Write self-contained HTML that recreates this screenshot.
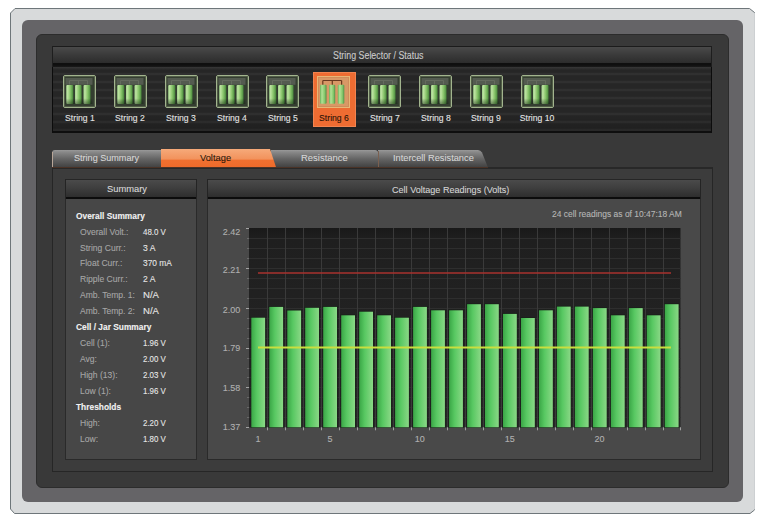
<!DOCTYPE html>
<html><head><meta charset="utf-8">
<style>
*{margin:0;padding:0;box-sizing:border-box}
html,body{width:763px;height:525px;overflow:hidden;background:#fff;font-family:"Liberation Sans",sans-serif}
.a{position:absolute}
.t{position:absolute;white-space:nowrap;line-height:1;transform-origin:0 0;-webkit-text-stroke:0.1px currentColor;-webkit-font-smoothing:antialiased}
#f1{left:10px;top:8px;width:745px;height:506px;background:#d8d9d9;border:1px solid #6e7378;border-right-color:#b8b8b8;border-radius:5px}
#f2{left:22px;top:20px;width:721px;height:482px;background:#656467;border-radius:6px}
#f3{left:36px;top:34px;width:693px;height:454px;background:#393939;border:1px solid #2c2c2c;border-radius:6px}
#hdr{left:52px;top:46px;width:660px;height:21px;border-left:1px solid #1e1e1e;border-right:1px solid #1e1e1e;background:linear-gradient(#1c1c1c 0,#1c1c1c 1px,#4a4a4a 1px,#3a3a3a 9px,#2c2c2c 17px,#0f0f0f 17px,#0f0f0f 19px,#1a1a1a 21px)}
#strs{left:52px;top:67px;width:660px;height:66px;background:linear-gradient(rgba(70,70,70,0.5),rgba(0,0,0,0) 3px),linear-gradient(rgba(0,0,0,0),rgba(0,0,0,0) 70%,rgba(0,0,0,0.18)),repeating-linear-gradient(#262626 0px,#262626 5px,#343434 6.5px,#262626 8px);background-position:0 0,0 0,0 0.5px;border:1px solid #0c0c0c;border-top:none;border-bottom:2px solid #0e0e0e}
#panel{left:52px;top:167px;width:661px;height:305px;background:#3c3c3c;border:1px solid #262626;border-top:2px solid #282828}
.ph{position:absolute;height:20px;box-shadow:inset 1px 0 #242424,inset -1px 0 #242424;background:linear-gradient(#262626 0,#262626 1px,#4a4a4a 1.5px,#3e3e3e 9px,#2e2e2e 18px,#0c0c0c 18.5px,#0c0c0c 20px)}
#sb{left:65px;top:199px;width:132px;height:261px;background:#474747;border:1px solid #2a2a2a;border-top:none}
#cb{left:207px;top:199px;width:494px;height:261px;background:#494949;border:1px solid #2a2a2a;border-top:none}
</style></head><body>
<svg class="a" style="left:0;top:0" width="763" height="525" viewBox="0 0 763 525">
<path d="M15 8.5H749.5L754.5 12.5V510L750 513.5H14.5L10.5 509V13Z" fill="#d8dadb" stroke="#6e767a" stroke-width="1"/>
<line x1="754.5" y1="13" x2="754.5" y2="509.5" stroke="#cdd0d2" stroke-width="1"/>
</svg>
<div class="a" id="f2"></div>
<div class="a" id="f3"></div>
<div class="a" id="hdr"></div>
<div class="t" style="left:333.40px;top:50.53px;font-size:10px;color:#cbcbcb;transform:scaleX(0.885)">String Selector / Status</div>
<div class="a" id="strs"></div>
<svg width="0" height="0" style="position:absolute"><defs>
<linearGradient id="bg" x1="0" x2="1" y1="0" y2="0"><stop offset="0" stop-color="#a0d08c"/><stop offset="0.2" stop-color="#bce2a0"/><stop offset="0.55" stop-color="#8ac66c"/><stop offset="0.85" stop-color="#5c9c4a"/><stop offset="1" stop-color="#3e6a34"/></linearGradient>
<linearGradient id="bg2" x1="0" x2="1" y1="0" y2="0"><stop offset="0" stop-color="#6cb05a"/><stop offset="0.3" stop-color="#b2e296"/><stop offset="0.7" stop-color="#86c86c"/><stop offset="1" stop-color="#4e9045"/></linearGradient>
<linearGradient id="bsh" x1="0" x2="0" y1="0" y2="1"><stop offset="0.7" stop-color="#000" stop-opacity="0"/><stop offset="1" stop-color="#102010" stop-opacity="0.45"/></linearGradient>
<linearGradient id="gb" x1="0" x2="1" y1="0" y2="0"><stop offset="0" stop-color="#3aa646"/><stop offset="0.4" stop-color="#58c862"/><stop offset="1" stop-color="#8ad886"/></linearGradient>
</defs></svg>
<svg class="a" style="left:63px;top:75px" width="33" height="33" viewBox="0 0 33 33">
<rect x="0.5" y="0.5" width="32" height="32" rx="1.5" fill="#343e30" stroke="#a2b48e"/>
<rect x="1.5" y="1.5" width="30" height="30" fill="none" stroke="#5a664e" stroke-opacity="0.8"/>
<rect x="2.5" y="3" width="27" height="6.8" fill="#545b50"/>
<path d="M6.5 5.5H24.5M6.5 5.5V9.5M15.5 5.5V9.5M24.5 5.5V9.5" stroke="#646b5e" stroke-width="1" fill="none"/>
<rect x="3.2" y="10" width="7.2" height="19" rx="1" fill="url(#bg)"/>
<rect x="12" y="10" width="6.8" height="19" rx="1" fill="url(#bg)"/>
<rect x="20.5" y="10" width="7.2" height="19" rx="1" fill="url(#bg)"/>
<rect x="2.5" y="10" width="27" height="19" fill="url(#bsh)"/>
</svg>
<div class="t" style="left:49.5px;top:113.07px;width:60px;text-align:center;font-size:9.6px;color:#e4e4e4;transform:scaleX(0.9);transform-origin:30px 0">String 1</div>
<svg class="a" style="left:114px;top:75px" width="33" height="33" viewBox="0 0 33 33">
<rect x="0.5" y="0.5" width="32" height="32" rx="1.5" fill="#343e30" stroke="#a2b48e"/>
<rect x="1.5" y="1.5" width="30" height="30" fill="none" stroke="#5a664e" stroke-opacity="0.8"/>
<rect x="2.5" y="3" width="27" height="6.8" fill="#545b50"/>
<path d="M6.5 5.5H24.5M6.5 5.5V9.5M15.5 5.5V9.5M24.5 5.5V9.5" stroke="#646b5e" stroke-width="1" fill="none"/>
<rect x="3.2" y="10" width="7.2" height="19" rx="1" fill="url(#bg)"/>
<rect x="12" y="10" width="6.8" height="19" rx="1" fill="url(#bg)"/>
<rect x="20.5" y="10" width="7.2" height="19" rx="1" fill="url(#bg)"/>
<rect x="2.5" y="10" width="27" height="19" fill="url(#bsh)"/>
</svg>
<div class="t" style="left:100.4px;top:113.07px;width:60px;text-align:center;font-size:9.6px;color:#e4e4e4;transform:scaleX(0.9);transform-origin:30px 0">String 2</div>
<svg class="a" style="left:165px;top:75px" width="33" height="33" viewBox="0 0 33 33">
<rect x="0.5" y="0.5" width="32" height="32" rx="1.5" fill="#343e30" stroke="#a2b48e"/>
<rect x="1.5" y="1.5" width="30" height="30" fill="none" stroke="#5a664e" stroke-opacity="0.8"/>
<rect x="2.5" y="3" width="27" height="6.8" fill="#545b50"/>
<path d="M6.5 5.5H24.5M6.5 5.5V9.5M15.5 5.5V9.5M24.5 5.5V9.5" stroke="#646b5e" stroke-width="1" fill="none"/>
<rect x="3.2" y="10" width="7.2" height="19" rx="1" fill="url(#bg)"/>
<rect x="12" y="10" width="6.8" height="19" rx="1" fill="url(#bg)"/>
<rect x="20.5" y="10" width="7.2" height="19" rx="1" fill="url(#bg)"/>
<rect x="2.5" y="10" width="27" height="19" fill="url(#bsh)"/>
</svg>
<div class="t" style="left:151.2px;top:113.07px;width:60px;text-align:center;font-size:9.6px;color:#e4e4e4;transform:scaleX(0.9);transform-origin:30px 0">String 3</div>
<svg class="a" style="left:216px;top:75px" width="33" height="33" viewBox="0 0 33 33">
<rect x="0.5" y="0.5" width="32" height="32" rx="1.5" fill="#343e30" stroke="#a2b48e"/>
<rect x="1.5" y="1.5" width="30" height="30" fill="none" stroke="#5a664e" stroke-opacity="0.8"/>
<rect x="2.5" y="3" width="27" height="6.8" fill="#545b50"/>
<path d="M6.5 5.5H24.5M6.5 5.5V9.5M15.5 5.5V9.5M24.5 5.5V9.5" stroke="#646b5e" stroke-width="1" fill="none"/>
<rect x="3.2" y="10" width="7.2" height="19" rx="1" fill="url(#bg)"/>
<rect x="12" y="10" width="6.8" height="19" rx="1" fill="url(#bg)"/>
<rect x="20.5" y="10" width="7.2" height="19" rx="1" fill="url(#bg)"/>
<rect x="2.5" y="10" width="27" height="19" fill="url(#bsh)"/>
</svg>
<div class="t" style="left:202.1px;top:113.07px;width:60px;text-align:center;font-size:9.6px;color:#e4e4e4;transform:scaleX(0.9);transform-origin:30px 0">String 4</div>
<svg class="a" style="left:266px;top:75px" width="33" height="33" viewBox="0 0 33 33">
<rect x="0.5" y="0.5" width="32" height="32" rx="1.5" fill="#343e30" stroke="#a2b48e"/>
<rect x="1.5" y="1.5" width="30" height="30" fill="none" stroke="#5a664e" stroke-opacity="0.8"/>
<rect x="2.5" y="3" width="27" height="6.8" fill="#545b50"/>
<path d="M6.5 5.5H24.5M6.5 5.5V9.5M15.5 5.5V9.5M24.5 5.5V9.5" stroke="#646b5e" stroke-width="1" fill="none"/>
<rect x="3.2" y="10" width="7.2" height="19" rx="1" fill="url(#bg)"/>
<rect x="12" y="10" width="6.8" height="19" rx="1" fill="url(#bg)"/>
<rect x="20.5" y="10" width="7.2" height="19" rx="1" fill="url(#bg)"/>
<rect x="2.5" y="10" width="27" height="19" fill="url(#bsh)"/>
</svg>
<div class="t" style="left:252.9px;top:113.07px;width:60px;text-align:center;font-size:9.6px;color:#e4e4e4;transform:scaleX(0.9);transform-origin:30px 0">String 5</div>
<div class="a" style="left:313px;top:72px;width:43px;height:55px;background:#ee6c32;border:1px solid #f28450"></div>
<svg class="a" style="left:317px;top:76px" width="33" height="32" viewBox="0 0 33 32">
<rect x="0.5" y="0.5" width="32" height="31" fill="#d89866" stroke="#e8b676"/>
<rect x="1.5" y="1.5" width="30" height="29" fill="none" stroke="#cf8c5a"/>
<path d="M5.8 4.5H24.6M5.8 4.5V9M15.3 4.5V9M24.6 4.5V9" stroke="#6b3a20" stroke-width="1.2" fill="none"/>
<rect x="3" y="8.8" width="6.5" height="19" rx="1" fill="url(#bg2)"/>
<rect x="12" y="8.8" width="6.2" height="19" rx="1" fill="url(#bg2)"/>
<rect x="20.8" y="8.8" width="6.5" height="19" rx="1" fill="url(#bg2)"/>
</svg>
<div class="t" style="left:303.8px;top:113.07px;width:60px;text-align:center;font-size:9.6px;color:#2a1206;transform:scaleX(0.9);transform-origin:30px 0">String 6</div>
<svg class="a" style="left:368px;top:75px" width="33" height="33" viewBox="0 0 33 33">
<rect x="0.5" y="0.5" width="32" height="32" rx="1.5" fill="#343e30" stroke="#a2b48e"/>
<rect x="1.5" y="1.5" width="30" height="30" fill="none" stroke="#5a664e" stroke-opacity="0.8"/>
<rect x="2.5" y="3" width="27" height="6.8" fill="#545b50"/>
<path d="M6.5 5.5H24.5M6.5 5.5V9.5M15.5 5.5V9.5M24.5 5.5V9.5" stroke="#646b5e" stroke-width="1" fill="none"/>
<rect x="3.2" y="10" width="7.2" height="19" rx="1" fill="url(#bg)"/>
<rect x="12" y="10" width="6.8" height="19" rx="1" fill="url(#bg)"/>
<rect x="20.5" y="10" width="7.2" height="19" rx="1" fill="url(#bg)"/>
<rect x="2.5" y="10" width="27" height="19" fill="url(#bsh)"/>
</svg>
<div class="t" style="left:354.7px;top:113.07px;width:60px;text-align:center;font-size:9.6px;color:#e4e4e4;transform:scaleX(0.9);transform-origin:30px 0">String 7</div>
<svg class="a" style="left:419px;top:75px" width="33" height="33" viewBox="0 0 33 33">
<rect x="0.5" y="0.5" width="32" height="32" rx="1.5" fill="#343e30" stroke="#a2b48e"/>
<rect x="1.5" y="1.5" width="30" height="30" fill="none" stroke="#5a664e" stroke-opacity="0.8"/>
<rect x="2.5" y="3" width="27" height="6.8" fill="#545b50"/>
<path d="M6.5 5.5H24.5M6.5 5.5V9.5M15.5 5.5V9.5M24.5 5.5V9.5" stroke="#646b5e" stroke-width="1" fill="none"/>
<rect x="3.2" y="10" width="7.2" height="19" rx="1" fill="url(#bg)"/>
<rect x="12" y="10" width="6.8" height="19" rx="1" fill="url(#bg)"/>
<rect x="20.5" y="10" width="7.2" height="19" rx="1" fill="url(#bg)"/>
<rect x="2.5" y="10" width="27" height="19" fill="url(#bsh)"/>
</svg>
<div class="t" style="left:405.5px;top:113.07px;width:60px;text-align:center;font-size:9.6px;color:#e4e4e4;transform:scaleX(0.9);transform-origin:30px 0">String 8</div>
<svg class="a" style="left:470px;top:75px" width="33" height="33" viewBox="0 0 33 33">
<rect x="0.5" y="0.5" width="32" height="32" rx="1.5" fill="#343e30" stroke="#a2b48e"/>
<rect x="1.5" y="1.5" width="30" height="30" fill="none" stroke="#5a664e" stroke-opacity="0.8"/>
<rect x="2.5" y="3" width="27" height="6.8" fill="#545b50"/>
<path d="M6.5 5.5H24.5M6.5 5.5V9.5M15.5 5.5V9.5M24.5 5.5V9.5" stroke="#646b5e" stroke-width="1" fill="none"/>
<rect x="3.2" y="10" width="7.2" height="19" rx="1" fill="url(#bg)"/>
<rect x="12" y="10" width="6.8" height="19" rx="1" fill="url(#bg)"/>
<rect x="20.5" y="10" width="7.2" height="19" rx="1" fill="url(#bg)"/>
<rect x="2.5" y="10" width="27" height="19" fill="url(#bsh)"/>
</svg>
<div class="t" style="left:456.4px;top:113.07px;width:60px;text-align:center;font-size:9.6px;color:#e4e4e4;transform:scaleX(0.9);transform-origin:30px 0">String 9</div>
<svg class="a" style="left:521px;top:75px" width="33" height="33" viewBox="0 0 33 33">
<rect x="0.5" y="0.5" width="32" height="32" rx="1.5" fill="#343e30" stroke="#a2b48e"/>
<rect x="1.5" y="1.5" width="30" height="30" fill="none" stroke="#5a664e" stroke-opacity="0.8"/>
<rect x="2.5" y="3" width="27" height="6.8" fill="#545b50"/>
<path d="M6.5 5.5H24.5M6.5 5.5V9.5M15.5 5.5V9.5M24.5 5.5V9.5" stroke="#646b5e" stroke-width="1" fill="none"/>
<rect x="3.2" y="10" width="7.2" height="19" rx="1" fill="url(#bg)"/>
<rect x="12" y="10" width="6.8" height="19" rx="1" fill="url(#bg)"/>
<rect x="20.5" y="10" width="7.2" height="19" rx="1" fill="url(#bg)"/>
<rect x="2.5" y="10" width="27" height="19" fill="url(#bsh)"/>
</svg>
<div class="t" style="left:507.2px;top:113.07px;width:60px;text-align:center;font-size:9.6px;color:#e4e4e4;transform:scaleX(0.9);transform-origin:30px 0">String 10</div>
<div class="a" id="panel"></div>
<svg class="a" style="left:52px;top:149px" width="440" height="20" viewBox="0 0 440 20">
<defs>
<linearGradient id="tg" x1="0" x2="0" y1="0" y2="1"><stop offset="0" stop-color="#9a9a9a"/><stop offset="0.1" stop-color="#8a8a8a"/><stop offset="0.5" stop-color="#646464"/><stop offset="1" stop-color="#3e3e3e"/></linearGradient>
<linearGradient id="to" x1="0" x2="0" y1="0" y2="1"><stop offset="0" stop-color="#f6aa7a"/><stop offset="0.53" stop-color="#f2925c"/><stop offset="0.59" stop-color="#f07030"/><stop offset="1" stop-color="#ee6a2a"/></linearGradient>
</defs>
<path d="M0 19V4Q0 1 3 1H112V19Z" fill="url(#tg)"/>
<path d="M219 1H323Q325.5 1 326.5 4V19H219Z" fill="url(#tg)"/>
<path d="M326 1H426Q428.5 1 430 3.5L436.2 19H326Z" fill="url(#tg)"/>
<path d="M109 0H218L224.3 19H109Z" fill="url(#to)"/>
<line x1="326.5" y1="2" x2="326.5" y2="19" stroke="#7a6050" stroke-width="1"/>
<line x1="0.5" y1="3" x2="0.5" y2="19" stroke="#b8a698" stroke-width="1"/>
<line x1="0" y1="18.5" x2="436" y2="18.5" stroke="#4a3226" stroke-width="1"/>
</svg>
<div class="t" style="left:74.00px;top:153.00px;font-size:9.8px;color:#d6d6d6;transform:scaleX(0.926)">String Summary</div>
<div class="t" style="left:199.60px;top:153.00px;font-size:9.8px;color:#2a160a;transform:scaleX(0.950)">Voltage</div>
<div class="t" style="left:300.80px;top:153.00px;font-size:9.8px;color:#d6d6d6;transform:scaleX(0.965)">Resistance</div>
<div class="t" style="left:392.60px;top:153.00px;font-size:9.8px;color:#d6d6d6;transform:scaleX(0.945)">Intercell Resistance</div>
<div class="ph" style="left:65px;top:179px;width:132px"></div>
<div class="a" id="sb"></div>
<div class="t" style="left:107.40px;top:183.90px;font-size:9.8px;color:#d8d8d8;transform:scaleX(0.953)">Summary</div>
<div class="t" style="left:75.60px;top:212.38px;font-size:9px;color:#f2f2f2;font-weight:bold;transform:scaleX(0.930)">Overall Summary</div>
<div class="t" style="left:79.60px;top:228.38px;font-size:9px;color:#a6a6a6;transform:scaleX(0.950)">Overall Volt.:</div>
<div class="t" style="left:143.40px;top:228.38px;font-size:9px;color:#e6e6e6;transform:scaleX(0.880)">48.0 V</div>
<div class="t" style="left:79.60px;top:244.38px;font-size:9px;color:#a6a6a6;transform:scaleX(0.950)">String Curr.:</div>
<div class="t" style="left:143.40px;top:244.38px;font-size:9px;color:#e6e6e6;transform:scaleX(0.950)">3 A</div>
<div class="t" style="left:79.60px;top:259.38px;font-size:9px;color:#a6a6a6;transform:scaleX(0.950)">Float Curr.:</div>
<div class="t" style="left:143.40px;top:259.38px;font-size:9px;color:#e6e6e6;transform:scaleX(0.930)">370 mA</div>
<div class="t" style="left:79.60px;top:275.38px;font-size:9px;color:#a6a6a6;transform:scaleX(0.950)">Ripple Curr.:</div>
<div class="t" style="left:143.40px;top:275.38px;font-size:9px;color:#e6e6e6;transform:scaleX(0.950)">2 A</div>
<div class="t" style="left:79.60px;top:291.38px;font-size:9px;color:#a6a6a6;transform:scaleX(0.950)">Amb. Temp. 1:</div>
<div class="t" style="left:143.40px;top:291.38px;font-size:9px;color:#e6e6e6;transform:scaleX(1.060)">N/A</div>
<div class="t" style="left:79.60px;top:307.38px;font-size:9px;color:#a6a6a6;transform:scaleX(0.950)">Amb. Temp. 2:</div>
<div class="t" style="left:143.40px;top:307.38px;font-size:9px;color:#e6e6e6;transform:scaleX(1.060)">N/A</div>
<div class="t" style="left:75.60px;top:323.38px;font-size:9px;color:#f2f2f2;font-weight:bold;transform:scaleX(0.930)">Cell / Jar Summary</div>
<div class="t" style="left:79.60px;top:339.38px;font-size:9px;color:#a6a6a6;transform:scaleX(0.950)">Cell (1):</div>
<div class="t" style="left:143.40px;top:339.38px;font-size:9px;color:#e6e6e6;transform:scaleX(0.880)">1.96 V</div>
<div class="t" style="left:79.60px;top:355.38px;font-size:9px;color:#a6a6a6;transform:scaleX(0.950)">Avg:</div>
<div class="t" style="left:143.40px;top:355.38px;font-size:9px;color:#e6e6e6;transform:scaleX(0.880)">2.00 V</div>
<div class="t" style="left:79.60px;top:371.38px;font-size:9px;color:#a6a6a6;transform:scaleX(0.950)">High (13):</div>
<div class="t" style="left:143.40px;top:371.38px;font-size:9px;color:#e6e6e6;transform:scaleX(0.880)">2.03 V</div>
<div class="t" style="left:79.60px;top:387.38px;font-size:9px;color:#a6a6a6;transform:scaleX(0.950)">Low (1):</div>
<div class="t" style="left:143.40px;top:387.38px;font-size:9px;color:#e6e6e6;transform:scaleX(0.880)">1.96 V</div>
<div class="t" style="left:75.60px;top:403.38px;font-size:9px;color:#f2f2f2;font-weight:bold;transform:scaleX(0.930)">Thresholds</div>
<div class="t" style="left:79.60px;top:419.38px;font-size:9px;color:#a6a6a6;transform:scaleX(0.950)">High:</div>
<div class="t" style="left:143.40px;top:419.38px;font-size:9px;color:#e6e6e6;transform:scaleX(0.880)">2.20 V</div>
<div class="t" style="left:79.60px;top:435.38px;font-size:9px;color:#a6a6a6;transform:scaleX(0.950)">Low:</div>
<div class="t" style="left:143.40px;top:435.38px;font-size:9px;color:#e6e6e6;transform:scaleX(0.880)">1.80 V</div>
<div class="ph" style="left:207px;top:179px;width:494px"></div>
<div class="a" id="cb"></div>
<div class="t" style="left:392.40px;top:184.50px;font-size:9.8px;color:#d4d4d4;transform:scaleX(0.925)">Cell Voltage Readings (Volts)</div>
<div class="t" style="left:552.20px;top:210.38px;font-size:9px;color:#b6b6b6;transform:scaleX(0.940)">24 cell readings as of 10:47:18 AM</div>
<svg class="a" style="left:0;top:0" width="763" height="525" viewBox="0 0 763 525">
<defs><linearGradient id="pbg" x1="0" x2="0" y1="0" y2="1"><stop offset="0" stop-color="#191919"/><stop offset="0.06" stop-color="#1f1f1f"/><stop offset="1" stop-color="#262626"/></linearGradient></defs>
<rect x="249" y="228" width="431.5" height="199.3" fill="url(#pbg)"/>
<line x1="249" y1="238.5" x2="680.5" y2="238.5" stroke="#2e2e2e" stroke-width="1"/>
<line x1="249" y1="248.5" x2="680.5" y2="248.5" stroke="#2e2e2e" stroke-width="1"/>
<line x1="249" y1="258.5" x2="680.5" y2="258.5" stroke="#2e2e2e" stroke-width="1"/>
<line x1="249" y1="268.5" x2="680.5" y2="268.5" stroke="#2e2e2e" stroke-width="1"/>
<line x1="249" y1="278.5" x2="680.5" y2="278.5" stroke="#2e2e2e" stroke-width="1"/>
<line x1="249" y1="288.5" x2="680.5" y2="288.5" stroke="#2e2e2e" stroke-width="1"/>
<line x1="249" y1="298.5" x2="680.5" y2="298.5" stroke="#2e2e2e" stroke-width="1"/>
<line x1="249" y1="308.5" x2="680.5" y2="308.5" stroke="#2e2e2e" stroke-width="1"/>
<line x1="249" y1="318.5" x2="680.5" y2="318.5" stroke="#2e2e2e" stroke-width="1"/>
<line x1="249" y1="328.5" x2="680.5" y2="328.5" stroke="#2e2e2e" stroke-width="1"/>
<line x1="249" y1="338.5" x2="680.5" y2="338.5" stroke="#2e2e2e" stroke-width="1"/>
<line x1="249" y1="348.5" x2="680.5" y2="348.5" stroke="#2e2e2e" stroke-width="1"/>
<line x1="249" y1="358.5" x2="680.5" y2="358.5" stroke="#2e2e2e" stroke-width="1"/>
<line x1="249" y1="368.5" x2="680.5" y2="368.5" stroke="#2e2e2e" stroke-width="1"/>
<line x1="249" y1="377.5" x2="680.5" y2="377.5" stroke="#2e2e2e" stroke-width="1"/>
<line x1="249" y1="387.5" x2="680.5" y2="387.5" stroke="#2e2e2e" stroke-width="1"/>
<line x1="249" y1="397.5" x2="680.5" y2="397.5" stroke="#2e2e2e" stroke-width="1"/>
<line x1="249" y1="407.5" x2="680.5" y2="407.5" stroke="#2e2e2e" stroke-width="1"/>
<line x1="249" y1="417.5" x2="680.5" y2="417.5" stroke="#2e2e2e" stroke-width="1"/>
<line x1="267.5" y1="228" x2="267.5" y2="427.3" stroke="#3a3a3a" stroke-width="1"/>
<line x1="285.5" y1="228" x2="285.5" y2="427.3" stroke="#3a3a3a" stroke-width="1"/>
<line x1="303.5" y1="228" x2="303.5" y2="427.3" stroke="#3a3a3a" stroke-width="1"/>
<line x1="321.5" y1="228" x2="321.5" y2="427.3" stroke="#3a3a3a" stroke-width="1"/>
<line x1="339.5" y1="228" x2="339.5" y2="427.3" stroke="#3a3a3a" stroke-width="1"/>
<line x1="357.5" y1="228" x2="357.5" y2="427.3" stroke="#3a3a3a" stroke-width="1"/>
<line x1="375.5" y1="228" x2="375.5" y2="427.3" stroke="#3a3a3a" stroke-width="1"/>
<line x1="393.5" y1="228" x2="393.5" y2="427.3" stroke="#3a3a3a" stroke-width="1"/>
<line x1="411.5" y1="228" x2="411.5" y2="427.3" stroke="#3a3a3a" stroke-width="1"/>
<line x1="429.5" y1="228" x2="429.5" y2="427.3" stroke="#3a3a3a" stroke-width="1"/>
<line x1="447.5" y1="228" x2="447.5" y2="427.3" stroke="#3a3a3a" stroke-width="1"/>
<line x1="465.5" y1="228" x2="465.5" y2="427.3" stroke="#3a3a3a" stroke-width="1"/>
<line x1="483.5" y1="228" x2="483.5" y2="427.3" stroke="#3a3a3a" stroke-width="1"/>
<line x1="501.5" y1="228" x2="501.5" y2="427.3" stroke="#3a3a3a" stroke-width="1"/>
<line x1="519.5" y1="228" x2="519.5" y2="427.3" stroke="#3a3a3a" stroke-width="1"/>
<line x1="537.5" y1="228" x2="537.5" y2="427.3" stroke="#3a3a3a" stroke-width="1"/>
<line x1="555.5" y1="228" x2="555.5" y2="427.3" stroke="#3a3a3a" stroke-width="1"/>
<line x1="573.5" y1="228" x2="573.5" y2="427.3" stroke="#3a3a3a" stroke-width="1"/>
<line x1="591.5" y1="228" x2="591.5" y2="427.3" stroke="#3a3a3a" stroke-width="1"/>
<line x1="609.5" y1="228" x2="609.5" y2="427.3" stroke="#3a3a3a" stroke-width="1"/>
<line x1="627.5" y1="228" x2="627.5" y2="427.3" stroke="#3a3a3a" stroke-width="1"/>
<line x1="645.5" y1="228" x2="645.5" y2="427.3" stroke="#3a3a3a" stroke-width="1"/>
<line x1="663.5" y1="228" x2="663.5" y2="427.3" stroke="#3a3a3a" stroke-width="1"/>
<rect x="251.3" y="317.7" width="13.8" height="109.6" fill="none" stroke="#141c14" stroke-opacity="0.7" stroke-width="1.4"/>
<rect x="251.3" y="317.7" width="13.8" height="109.6" fill="url(#gb)"/>
<rect x="269.3" y="306.9" width="13.8" height="120.4" fill="none" stroke="#141c14" stroke-opacity="0.7" stroke-width="1.4"/>
<rect x="269.3" y="306.9" width="13.8" height="120.4" fill="url(#gb)"/>
<rect x="287.3" y="310.5" width="13.8" height="116.8" fill="none" stroke="#141c14" stroke-opacity="0.7" stroke-width="1.4"/>
<rect x="287.3" y="310.5" width="13.8" height="116.8" fill="url(#gb)"/>
<rect x="305.2" y="307.8" width="13.8" height="119.5" fill="none" stroke="#141c14" stroke-opacity="0.7" stroke-width="1.4"/>
<rect x="305.2" y="307.8" width="13.8" height="119.5" fill="url(#gb)"/>
<rect x="323.2" y="306.9" width="13.8" height="120.4" fill="none" stroke="#141c14" stroke-opacity="0.7" stroke-width="1.4"/>
<rect x="323.2" y="306.9" width="13.8" height="120.4" fill="url(#gb)"/>
<rect x="341.2" y="315.3" width="13.8" height="112.0" fill="none" stroke="#141c14" stroke-opacity="0.7" stroke-width="1.4"/>
<rect x="341.2" y="315.3" width="13.8" height="112.0" fill="url(#gb)"/>
<rect x="359.2" y="311.7" width="13.8" height="115.6" fill="none" stroke="#141c14" stroke-opacity="0.7" stroke-width="1.4"/>
<rect x="359.2" y="311.7" width="13.8" height="115.6" fill="url(#gb)"/>
<rect x="377.2" y="315.3" width="13.8" height="112.0" fill="none" stroke="#141c14" stroke-opacity="0.7" stroke-width="1.4"/>
<rect x="377.2" y="315.3" width="13.8" height="112.0" fill="url(#gb)"/>
<rect x="395.1" y="317.7" width="13.8" height="109.6" fill="none" stroke="#141c14" stroke-opacity="0.7" stroke-width="1.4"/>
<rect x="395.1" y="317.7" width="13.8" height="109.6" fill="url(#gb)"/>
<rect x="413.1" y="306.9" width="13.8" height="120.4" fill="none" stroke="#141c14" stroke-opacity="0.7" stroke-width="1.4"/>
<rect x="413.1" y="306.9" width="13.8" height="120.4" fill="url(#gb)"/>
<rect x="431.1" y="310.3" width="13.8" height="117.0" fill="none" stroke="#141c14" stroke-opacity="0.7" stroke-width="1.4"/>
<rect x="431.1" y="310.3" width="13.8" height="117.0" fill="url(#gb)"/>
<rect x="449.1" y="310.3" width="13.8" height="117.0" fill="none" stroke="#141c14" stroke-opacity="0.7" stroke-width="1.4"/>
<rect x="449.1" y="310.3" width="13.8" height="117.0" fill="url(#gb)"/>
<rect x="467.1" y="304.2" width="13.8" height="123.1" fill="none" stroke="#141c14" stroke-opacity="0.7" stroke-width="1.4"/>
<rect x="467.1" y="304.2" width="13.8" height="123.1" fill="url(#gb)"/>
<rect x="485.0" y="304.2" width="13.8" height="123.1" fill="none" stroke="#141c14" stroke-opacity="0.7" stroke-width="1.4"/>
<rect x="485.0" y="304.2" width="13.8" height="123.1" fill="url(#gb)"/>
<rect x="503.0" y="313.9" width="13.8" height="113.4" fill="none" stroke="#141c14" stroke-opacity="0.7" stroke-width="1.4"/>
<rect x="503.0" y="313.9" width="13.8" height="113.4" fill="url(#gb)"/>
<rect x="521.0" y="318.0" width="13.8" height="109.3" fill="none" stroke="#141c14" stroke-opacity="0.7" stroke-width="1.4"/>
<rect x="521.0" y="318.0" width="13.8" height="109.3" fill="url(#gb)"/>
<rect x="539.0" y="310.3" width="13.8" height="117.0" fill="none" stroke="#141c14" stroke-opacity="0.7" stroke-width="1.4"/>
<rect x="539.0" y="310.3" width="13.8" height="117.0" fill="url(#gb)"/>
<rect x="556.9" y="306.6" width="13.8" height="120.7" fill="none" stroke="#141c14" stroke-opacity="0.7" stroke-width="1.4"/>
<rect x="556.9" y="306.6" width="13.8" height="120.7" fill="url(#gb)"/>
<rect x="574.9" y="306.6" width="13.8" height="120.7" fill="none" stroke="#141c14" stroke-opacity="0.7" stroke-width="1.4"/>
<rect x="574.9" y="306.6" width="13.8" height="120.7" fill="url(#gb)"/>
<rect x="592.9" y="308.1" width="13.8" height="119.2" fill="none" stroke="#141c14" stroke-opacity="0.7" stroke-width="1.4"/>
<rect x="592.9" y="308.1" width="13.8" height="119.2" fill="url(#gb)"/>
<rect x="610.9" y="315.3" width="13.8" height="112.0" fill="none" stroke="#141c14" stroke-opacity="0.7" stroke-width="1.4"/>
<rect x="610.9" y="315.3" width="13.8" height="112.0" fill="url(#gb)"/>
<rect x="628.9" y="308.1" width="13.8" height="119.2" fill="none" stroke="#141c14" stroke-opacity="0.7" stroke-width="1.4"/>
<rect x="628.9" y="308.1" width="13.8" height="119.2" fill="url(#gb)"/>
<rect x="646.8" y="315.3" width="13.8" height="112.0" fill="none" stroke="#141c14" stroke-opacity="0.7" stroke-width="1.4"/>
<rect x="646.8" y="315.3" width="13.8" height="112.0" fill="url(#gb)"/>
<rect x="664.8" y="304.2" width="13.8" height="123.1" fill="none" stroke="#141c14" stroke-opacity="0.7" stroke-width="1.4"/>
<rect x="664.8" y="304.2" width="13.8" height="123.1" fill="url(#gb)"/>
<line x1="258" y1="273" x2="671" y2="273" stroke="#a8322e" stroke-width="1.6"/>
<line x1="258" y1="347.6" x2="671" y2="347.6" stroke="#cade3e" stroke-width="2"/>
<line x1="246" y1="228.5" x2="249" y2="228.5" stroke="#a4a4a4" stroke-width="1"/>
<line x1="247" y1="238.5" x2="249" y2="238.5" stroke="#6a6a6a" stroke-width="1"/>
<line x1="247" y1="248.5" x2="249" y2="248.5" stroke="#6a6a6a" stroke-width="1"/>
<line x1="247" y1="258.5" x2="249" y2="258.5" stroke="#6a6a6a" stroke-width="1"/>
<line x1="246" y1="268.5" x2="249" y2="268.5" stroke="#a4a4a4" stroke-width="1"/>
<line x1="247" y1="278.5" x2="249" y2="278.5" stroke="#6a6a6a" stroke-width="1"/>
<line x1="247" y1="288.5" x2="249" y2="288.5" stroke="#6a6a6a" stroke-width="1"/>
<line x1="247" y1="298.5" x2="249" y2="298.5" stroke="#6a6a6a" stroke-width="1"/>
<line x1="246" y1="308.5" x2="249" y2="308.5" stroke="#a4a4a4" stroke-width="1"/>
<line x1="247" y1="318.5" x2="249" y2="318.5" stroke="#6a6a6a" stroke-width="1"/>
<line x1="247" y1="328.5" x2="249" y2="328.5" stroke="#6a6a6a" stroke-width="1"/>
<line x1="247" y1="338.5" x2="249" y2="338.5" stroke="#6a6a6a" stroke-width="1"/>
<line x1="246" y1="348.5" x2="249" y2="348.5" stroke="#a4a4a4" stroke-width="1"/>
<line x1="247" y1="358.5" x2="249" y2="358.5" stroke="#6a6a6a" stroke-width="1"/>
<line x1="247" y1="368.5" x2="249" y2="368.5" stroke="#6a6a6a" stroke-width="1"/>
<line x1="247" y1="377.5" x2="249" y2="377.5" stroke="#6a6a6a" stroke-width="1"/>
<line x1="246" y1="387.5" x2="249" y2="387.5" stroke="#a4a4a4" stroke-width="1"/>
<line x1="247" y1="397.5" x2="249" y2="397.5" stroke="#6a6a6a" stroke-width="1"/>
<line x1="247" y1="407.5" x2="249" y2="407.5" stroke="#6a6a6a" stroke-width="1"/>
<line x1="247" y1="417.5" x2="249" y2="417.5" stroke="#6a6a6a" stroke-width="1"/>
<line x1="246" y1="427.5" x2="249" y2="427.5" stroke="#a4a4a4" stroke-width="1"/>
<line x1="267.5" y1="427.3" x2="267.5" y2="430.3" stroke="#a0a0a0" stroke-width="1"/>
<line x1="285.5" y1="427.3" x2="285.5" y2="430.3" stroke="#a0a0a0" stroke-width="1"/>
<line x1="303.5" y1="427.3" x2="303.5" y2="430.3" stroke="#a0a0a0" stroke-width="1"/>
<line x1="321.5" y1="427.3" x2="321.5" y2="430.3" stroke="#a0a0a0" stroke-width="1"/>
<line x1="339.5" y1="427.3" x2="339.5" y2="430.3" stroke="#a0a0a0" stroke-width="1"/>
<line x1="357.5" y1="427.3" x2="357.5" y2="430.3" stroke="#a0a0a0" stroke-width="1"/>
<line x1="375.5" y1="427.3" x2="375.5" y2="430.3" stroke="#a0a0a0" stroke-width="1"/>
<line x1="393.5" y1="427.3" x2="393.5" y2="430.3" stroke="#a0a0a0" stroke-width="1"/>
<line x1="411.5" y1="427.3" x2="411.5" y2="430.3" stroke="#a0a0a0" stroke-width="1"/>
<line x1="429.5" y1="427.3" x2="429.5" y2="430.3" stroke="#a0a0a0" stroke-width="1"/>
<line x1="447.5" y1="427.3" x2="447.5" y2="430.3" stroke="#a0a0a0" stroke-width="1"/>
<line x1="465.5" y1="427.3" x2="465.5" y2="430.3" stroke="#a0a0a0" stroke-width="1"/>
<line x1="483.5" y1="427.3" x2="483.5" y2="430.3" stroke="#a0a0a0" stroke-width="1"/>
<line x1="501.5" y1="427.3" x2="501.5" y2="430.3" stroke="#a0a0a0" stroke-width="1"/>
<line x1="519.5" y1="427.3" x2="519.5" y2="430.3" stroke="#a0a0a0" stroke-width="1"/>
<line x1="537.5" y1="427.3" x2="537.5" y2="430.3" stroke="#a0a0a0" stroke-width="1"/>
<line x1="555.5" y1="427.3" x2="555.5" y2="430.3" stroke="#a0a0a0" stroke-width="1"/>
<line x1="573.5" y1="427.3" x2="573.5" y2="430.3" stroke="#a0a0a0" stroke-width="1"/>
<line x1="591.5" y1="427.3" x2="591.5" y2="430.3" stroke="#a0a0a0" stroke-width="1"/>
<line x1="609.5" y1="427.3" x2="609.5" y2="430.3" stroke="#a0a0a0" stroke-width="1"/>
<line x1="627.5" y1="427.3" x2="627.5" y2="430.3" stroke="#a0a0a0" stroke-width="1"/>
<line x1="645.5" y1="427.3" x2="645.5" y2="430.3" stroke="#a0a0a0" stroke-width="1"/>
<line x1="663.5" y1="427.3" x2="663.5" y2="430.3" stroke="#a0a0a0" stroke-width="1"/>
<line x1="680.5" y1="427.3" x2="680.5" y2="430.3" stroke="#a0a0a0" stroke-width="1"/>
</svg>
<div class="t" style="left:200px;width:40.4px;text-align:right;top:228.38px;font-size:9px;color:#b0b0b0">2.42</div>
<div class="t" style="left:200px;width:40.4px;text-align:right;top:266.38px;font-size:9px;color:#b0b0b0">2.21</div>
<div class="t" style="left:200px;width:40.4px;text-align:right;top:306.38px;font-size:9px;color:#b0b0b0">2.00</div>
<div class="t" style="left:200px;width:40.4px;text-align:right;top:344.38px;font-size:9px;color:#b0b0b0">1.79</div>
<div class="t" style="left:200px;width:40.4px;text-align:right;top:384.38px;font-size:9px;color:#b0b0b0">1.58</div>
<div class="t" style="left:200px;width:40.4px;text-align:right;top:423.38px;font-size:9px;color:#b0b0b0">1.37</div>
<div class="t" style="left:243.0px;width:30px;text-align:center;top:435.38px;font-size:9px;color:#b0b0b0">1</div>
<div class="t" style="left:314.9px;width:30px;text-align:center;top:435.38px;font-size:9px;color:#b0b0b0">5</div>
<div class="t" style="left:404.8px;width:30px;text-align:center;top:435.38px;font-size:9px;color:#b0b0b0">10</div>
<div class="t" style="left:494.7px;width:30px;text-align:center;top:435.38px;font-size:9px;color:#b0b0b0">15</div>
<div class="t" style="left:584.6px;width:30px;text-align:center;top:435.38px;font-size:9px;color:#b0b0b0">20</div>
</body></html>
